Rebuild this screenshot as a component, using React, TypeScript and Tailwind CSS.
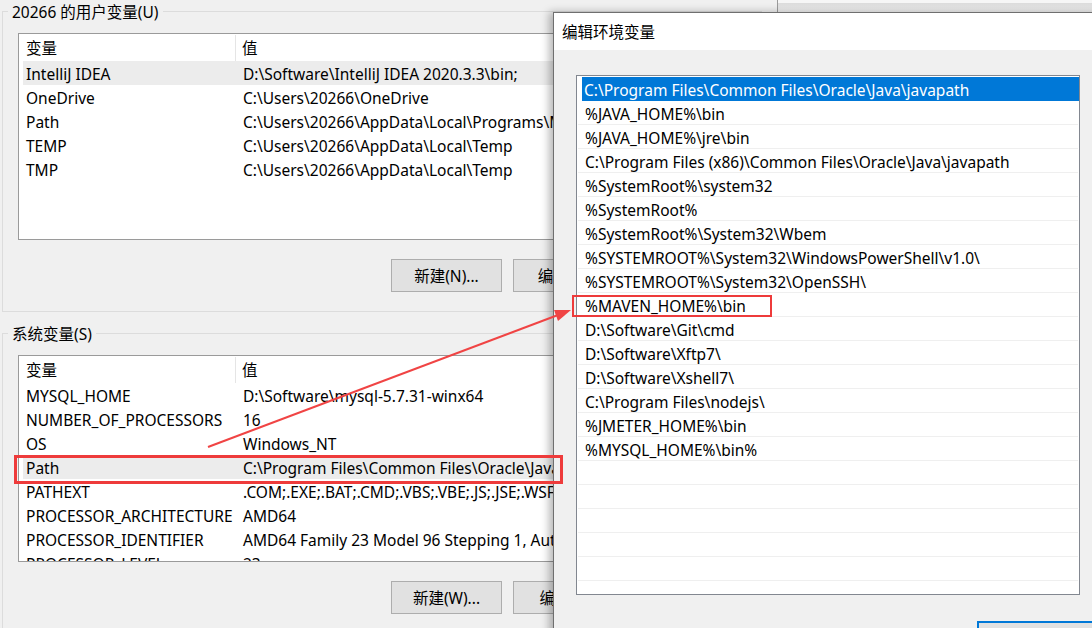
const font = "font-['Noto_Sans','Noto_Sans_CJK_SC',sans-serif]"

const userVars: [string, string][] = [
    ['IntelliJ IDEA', 'D:\\Software\\IntelliJ IDEA 2020.3.3\\bin;'],
    ['OneDrive', 'C:\\Users\\20266\\OneDrive'],
    ['Path', 'C:\\Users\\20266\\AppData\\Local\\Programs\\Microsoft VS Code\\bin'],
    ['TEMP', 'C:\\Users\\20266\\AppData\\Local\\Temp'],
    ['TMP', 'C:\\Users\\20266\\AppData\\Local\\Temp'],
]

const sysVars: [string, string][] = [
    ['MYSQL_HOME', 'D:\\Software\\mysql-5.7.31-winx64'],
    ['NUMBER_OF_PROCESSORS', '16'],
    ['OS', 'Windows_NT'],
    ['Path', 'C:\\Program Files\\Common Files\\Oracle\\Java\\javapath;C:\\Windows\\system32'],
    ['PATHEXT', '.COM;.EXE;.BAT;.CMD;.VBS;.VBE;.JS;.JSE;.WSF;.WSH;.MSC'],
    ['PROCESSOR_ARCHITECTURE', 'AMD64'],
    ['PROCESSOR_IDENTIFIER', 'AMD64 Family 23 Model 96 Stepping 1, AuthenticAMD'],
    ['PROCESSOR_LEVEL', '23'],
]

const paths = [
    'C:\\Program Files\\Common Files\\Oracle\\Java\\javapath',
    '%JAVA_HOME%\\bin',
    '%JAVA_HOME%\\jre\\bin',
    'C:\\Program Files (x86)\\Common Files\\Oracle\\Java\\javapath',
    '%SystemRoot%\\system32',
    '%SystemRoot%',
    '%SystemRoot%\\System32\\Wbem',
    '%SYSTEMROOT%\\System32\\WindowsPowerShell\\v1.0\\',
    '%SYSTEMROOT%\\System32\\OpenSSH\\',
    '%MAVEN_HOME%\\bin',
    'D:\\Software\\Git\\cmd',
    'D:\\Software\\Xftp7\\',
    'D:\\Software\\Xshell7\\',
    'C:\\Program Files\\nodejs\\',
    '%JMETER_HOME%\\bin',
    '%MYSQL_HOME%\\bin%',
]

const VarTable = ({ rows, hot }: { rows: [string, string][]; hot: number }) => (
    <div className="h-[207px] w-[745px] overflow-hidden border border-[#9a9a9a] bg-white">
        <div className="flex h-[27px] items-center pt-[1px]">
            <div className="flex h-full w-[217px] shrink-0 items-center border-r border-[#e5e5e5] pl-[7px]">变量</div>
            <div className="pl-[6px]">值</div>
        </div>
        {rows.map(([k, v], i) => (
            <div
                key={k + i}
                className={`ml-[4px] flex h-[24px] items-center whitespace-nowrap pt-[2px] ${i === hot ? 'bg-[#ececec]' : ''}`}
            >
                <div className="w-[213px] shrink-0 pl-[3px]">{k}</div>
                <div className="pl-[7px]">{v}</div>
            </div>
        ))}
    </div>
)

const Btn = ({ label }: { label: string }) => (
    <div className="flex h-[33px] w-[111px] items-center justify-center border border-[#adadad] bg-[#e1e1e1] pt-[1px]">
        {label}
    </div>
)

const Group = ({ title, rows, hot, btns, h }: {
    title: string
    rows: [string, string][]
    hot: number
    btns: string[]
    h: string
}) => (
    <div className={`relative border border-[#dcdcdc] pl-[15px] pt-[21px] ${h}`}>
        <div className="absolute -top-[11px] left-[5px] bg-[#f0f0f0] px-[4px] leading-[22px]">{title}</div>
        <VarTable rows={rows} hot={hot} />
        <div className="mt-[19px] flex gap-[11px] pl-[373px]">
            {btns.map((b) => (
                <Btn key={b} label={b} />
            ))}
        </div>
    </div>
)

export default function App() {
    return (
        <div className={`relative h-[628px] w-[1092px] overflow-hidden bg-[#f0f0f0] text-[15.5px] leading-[20px] text-black ${font}`}>
            <div className="flex">
                <div className="w-[778px] shrink-0 border-r border-[#9a9a9a] pl-[2px] pr-[15px] pt-[11px]">
                    <Group title="20266 的用户变量(U)" rows={userVars} hot={0} btns={['新建(N)...', '编辑(E)...', '删除(D)']} h="h-[301px]" />
                    <div className="h-[21px]" />
                    <Group title="系统变量(S)" rows={sysVars} hot={3} btns={['新建(W)...', '编辑(I)...', '删除(L)']} h="h-[320px] border-b-0" />
                </div>
                <div className="h-[12px] flex-1 border-t-[3px] border-[#f6f6f6] bg-gradient-to-b from-[#dcdcdc] to-[#f2f2f2]" />
            </div>

            {/* edit dialog window */}
            <div className="absolute left-[553px] top-[12px] h-[640px] w-[560px] border-l border-t border-[#6f6f6f] bg-[#f0f0f0] shadow-[-4px_0_8px_rgba(0,0,0,0.28)]">
                <div className="flex h-[37px] items-center bg-white pl-[8px] pt-[1px]">编辑环境变量</div>
                <div className="pl-[22px] pt-[25px]">
                    <div className="h-[520px] w-[504px] overflow-hidden border border-[#828790] bg-white pt-[1px]">
                        {paths.map((p, i) => (
                            <div
                                key={p}
                                className={`flex h-[24px] items-center whitespace-nowrap border-b pt-[2px] ${
                                    i === 0 ? 'ml-[5px] border-[#0078d7] bg-[#0078d7] pl-[2px] text-white' : 'ml-[1px] mr-[1px] border-[#efefef] pl-[7px]'
                                }`}
                            >
                                {p}
                            </div>
                        ))}
                        {Array.from({ length: 6 }).map((_, i) => (
                            <div key={i} className="ml-[1px] mr-[1px] h-[24px] border-b border-[#efefef]" />
                        ))}
                    </div>
                    <div className="ml-[401px] mt-[26px] h-[34px] w-[140px] border-2 border-[#0078d7] bg-[#e1e1e1]" />
                </div>
            </div>

            {/* annotations */}
            <div className="pointer-events-none absolute left-[14px] top-[455px] h-[29px] w-[549px] border-[3px] border-[#ee3b3b]" />
            <div className="pointer-events-none absolute left-[572px] top-[295px] h-[22px] w-[200px] border-2 border-[#ee3b3b]" />
            <svg className="pointer-events-none absolute left-0 top-0" width="1092" height="628">
                <line x1="208" y1="447" x2="558" y2="315" stroke="#f04444" strokeWidth="2" />
                <polygon points="571,310 558,321 554,310" fill="#f04444" />
            </svg>
        </div>
    )
}
